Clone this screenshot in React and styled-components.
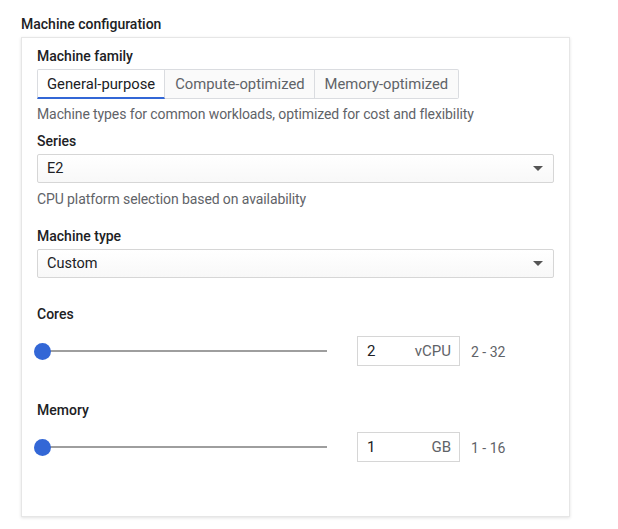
import styled, { createGlobalStyle } from "styled-components";

const GlobalStyle = createGlobalStyle`
  body {
    margin: 0;
    background: #fff;
    font-family: Roboto, "Noto Sans", sans-serif;
    font-size: 14px;
    color: #202124;
  }
  * {
    box-sizing: border-box;
  }
`;

const families = ["General-purpose", "Compute-optimized", "Memory-optimized"];

const Select = ({ value }) => (
  <SelectBox>
    <span>{value}</span>
    <Caret />
  </SelectBox>
);

const SliderRow = ({ value, unit, range }) => (
  <Row>
    <Track>
      <Thumb />
    </Track>
    <NumberBox>
      <span>{value}</span>
      <Unit>{unit}</Unit>
    </NumberBox>
    <Range>{range}</Range>
  </Row>
);

const App = () => {
  return (
    <Page>
      <GlobalStyle />
      <Title>Machine configuration</Title>
      <Card>
        <Label>Machine family</Label>
        <Tabs>
          {families.map((name, idx) => (
            <Tab key={name} active={idx === 0}>
              {name}
            </Tab>
          ))}
        </Tabs>
        <Hint top={5}>Machine types for common workloads, optimized for cost and flexibility</Hint>

        <Label top={7}>Series</Label>
        <Select value="E2" />
        <Hint top={6}>CPU platform selection based on availability</Hint>

        <Label top={17}>Machine type</Label>
        <Select value="Custom" />

        <Label top={26}>Cores</Label>
        <SliderRow value="2" unit="vCPU" range="2 - 32" />

        <Label top={34}>Memory</Label>
        <SliderRow value="1" unit="GB" range="1 - 16" />
      </Card>
    </Page>
  );
};

const Page = styled.div`
  padding: 14px 0 12px 21px;
`;

const Title = styled.h2`
  margin: 0 0 3px;
  font-size: 14px;
  line-height: 20px;
  font-weight: 500;
  color: #202124;
`;

const Card = styled.div`
  width: 549px;
  height: 480px;
  padding: 8px 15px 0 15px;
  border: 1px solid #e6e6e6;
  box-shadow: 0 1px 3px rgba(0, 0, 0, 0.12);
  background: #fff;
`;

const Label = styled.div`
  margin-top: ${(p) => p.top || 0}px;
  margin-bottom: 3px;
  font-size: 14px;
  line-height: 20px;
  font-weight: 500;
  color: #202124;
`;

const Hint = styled.div`
  margin-top: ${(p) => p.top || 0}px;
  font-size: 14px;
  line-height: 20px;
  letter-spacing: -0.1px;
  color: #5f6368;
`;

const Tabs = styled.div`
  display: flex;
`;

const Tab = styled.div`
  height: 30px;
  padding: 0 9px 0 9px;
  display: flex;
  align-items: center;
  font-size: 14.8px;
  border: 1px solid #dadce0;
  border-left-width: ${(p) => (p.active ? 1 : 0)}px;
  border-bottom: ${(p) => (p.active ? "2px solid #3367d6" : "1px solid #dadce0")};
  border-radius: ${(p) => (p.active ? "2px 0 0 0" : "0")};
  background: ${(p) => (p.active ? "#fff" : "#fafafa")};
  color: ${(p) => (p.active ? "#202124" : "#5f6368")};

  & + & {
    padding-left: 10px;
  }

  &:last-child {
    padding-right: 10px;
    border-radius: 0 2px 2px 0;
  }
`;

const SelectBox = styled.div`
  height: 29px;
  padding: 0 10px 0 9px;
  display: flex;
  align-items: center;
  justify-content: space-between;
  border: 1px solid #d6d6d6;
  border-radius: 2px;
  background: linear-gradient(#ffffff, #f8f8f8);
  font-size: 14.5px;
  color: #202124;
`;

const Caret = styled.span`
  width: 0;
  height: 0;
  border-left: 5px solid transparent;
  border-right: 5px solid transparent;
  border-top: 5px solid #555;
`;

const Row = styled.div`
  margin-top: 12px;
  display: flex;
  align-items: center;
`;

const Track = styled.div`
  position: relative;
  width: 285px;
  height: 2px;
  margin-left: 5px;
  background: #9e9e9e;
`;

const Thumb = styled.div`
  position: absolute;
  left: -8.5px;
  top: -7.5px;
  width: 17px;
  height: 17px;
  border-radius: 50%;
  background: #3367d6;
`;

const NumberBox = styled.div`
  width: 103px;
  height: 30px;
  margin-left: 30px;
  padding: 0 8px 0 9px;
  display: flex;
  align-items: center;
  justify-content: space-between;
  border: 1px solid #d6d6d6;
  font-size: 15px;
  color: #202124;
`;

const Unit = styled.span`
  color: #5f6368;
`;

const Range = styled.div`
  margin-left: 11px;
  margin-top: 2px;
  color: #5f6368;
`;

export default App;
